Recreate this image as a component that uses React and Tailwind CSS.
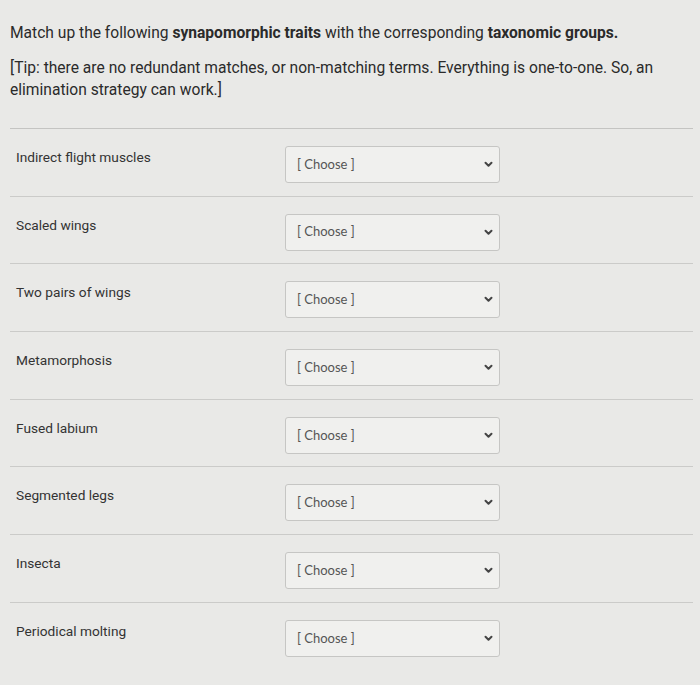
import React from 'react';

const traits = [
  'Indirect flight muscles',
  'Scaled wings',
  'Two pairs of wings',
  'Metamorphosis',
  'Fused labium',
  'Segmented legs',
  'Insecta',
  'Periodical molting',
];

function Chevron() {
  return (
    <svg width="9" height="7" viewBox="0 0 9 7" className="text-[#444]">
      <path d="M1.5 1.8 L4.5 4.8 L7.5 1.8" fill="none" stroke="currentColor" strokeWidth="2" strokeLinecap="round" strokeLinejoin="round" />
    </svg>
  );
}

export default function App() {
  return (
    <div className="w-[700px] h-[685px] overflow-hidden bg-[#e9e9e7] text-[#2b2b2b] font-['Roboto','Liberation_Sans',sans-serif]">
      <div className="px-[10px] pt-[22px]">
        <p className="text-[15.6px] leading-[22px]">
          Match up the following <strong className="font-bold">synapomorphic traits</strong> with the corresponding <strong className="font-bold">taxonomic groups.</strong>
        </p>
        <p className="mt-[13px] text-[15.6px] leading-[22px]">
          [Tip: there are no redundant matches, or non-matching terms. Everything is one-to-one. So, an elimination strategy can work.]
        </p>
      </div>

      <div className="mt-[27px] mx-[10px] mr-[7px] border-t border-[#c4c4c2]">
        {traits.map((t) => (
          <div key={t} className="flex h-[67.7px] border-b border-[#cbcbc9] last:border-b-0">
            <div className="w-[275px] pl-[6px] pt-[19px] text-[13.7px] leading-[18px] text-[#333]">{t}</div>
            <div className="pt-[17px]">
              <div className="w-[215px] h-[37px] flex items-center justify-between pl-[11px] pr-[6px] bg-[#f0f0ee] border border-[#c6c6c4] rounded-[3px] font-['Lato','Liberation_Sans',sans-serif] text-[13px] text-[#555]">
                <span>[ Choose ]</span>
                <Chevron />
              </div>
            </div>
          </div>
        ))}
      </div>
    </div>
  );
}
